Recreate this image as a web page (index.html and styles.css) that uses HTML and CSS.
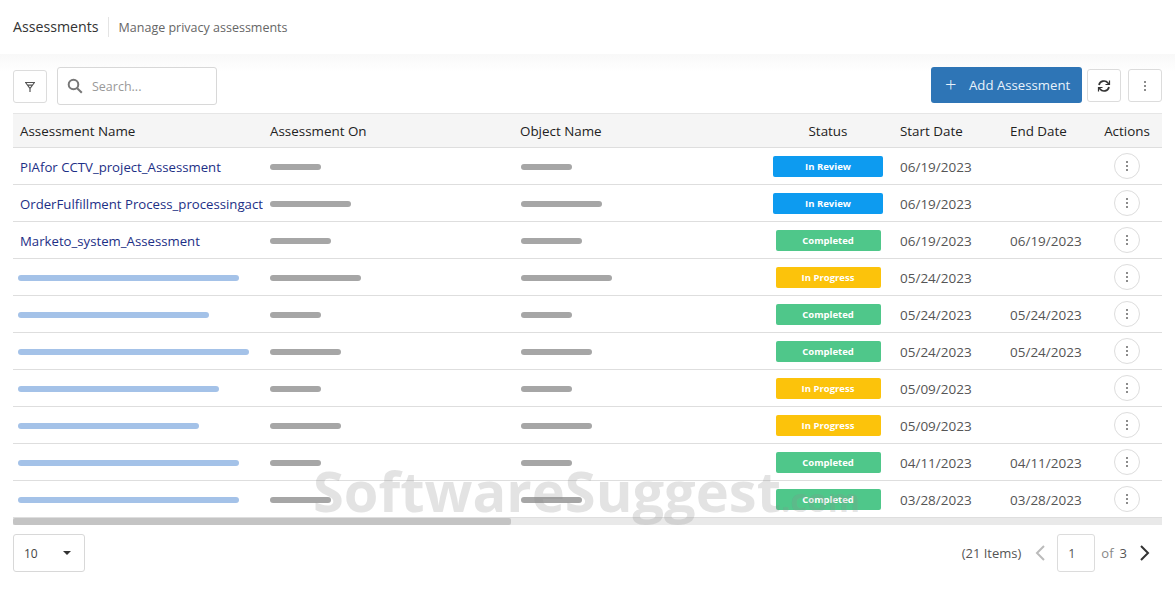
FILE: index.html
```html
<!DOCTYPE html>
<html lang="en">
<head>
<meta charset="utf-8">
<title>Assessments</title>
<link rel="stylesheet" href="styles.css">
</head>
<body>
<header class="page-head">
  <h1 class="page-title">Assessments</h1>
  <p class="page-sub">Manage privacy assessments</p>
</header>
<main class="content">
  <div class="toolbar">
    <button class="icon-btn filter" aria-label="Filter">
      <svg width="14" height="14" viewBox="0 0 14 14" fill="none" stroke="#555" stroke-width="1.2"><path d="M2 2.5h10M2.6 2.5 7 8.5l4.4-6M4 5.2h6M7 8.5V12"/></svg>
    </button>
    <div class="search">
      <svg width="16" height="16" viewBox="0 0 16 16" fill="none" stroke="#777" stroke-width="2"><circle cx="6.5" cy="6.5" r="4.8"/><path d="m10.2 10.2 4.6 4.6"/></svg>
      <span>Search...</span>
    </div>
    <button class="add-btn"><span class="plus">+</span>Add Assessment</button>
    <button class="icon-btn refresh" aria-label="Refresh">
      <svg width="14" height="14" viewBox="0 0 14 14" fill="none" stroke="#333" stroke-width="1.7"><path d="M2 6a5.1 5.1 0 0 1 9-2l1 1.2M12 8a5.1 5.1 0 0 1-9 2L2 8.800"/><path d="M12.500 1.500v4h-4M1.500 12.500v-4h4" stroke-width="1.200"/></svg>
    </button>
    <button class="icon-btn more" aria-label="More"><i class="dots"></i></button>
  </div>

  <table class="grid">
    <thead>
      <tr>
        <th class="c-name">Assessment Name</th>
        <th class="c-on">Assessment On</th>
        <th class="c-obj">Object Name</th>
        <th class="c-status">Status</th>
        <th class="c-start">Start Date</th>
        <th class="c-end">End Date</th>
        <th class="c-act">Actions</th>
      </tr>
    </thead>
    <tbody>
      <tr>
        <td><a class="link">PIAfor CCTV_project_Assessment</a></td>
        <td><i class="bar" style="width:51px"></i></td>
        <td><i class="bar obj" style="width:51px"></i></td>
        <td class="mid"><span class="badge review">In Review</span></td>
        <td>06/19/2023</td><td></td>
        <td class="mid"><button class="row-act" aria-label="Row actions"><i class="dots"></i></button></td>
      </tr>
      <tr>
        <td><a class="link">OrderFulfillment Process_processingact</a></td>
        <td><i class="bar" style="width:81px"></i></td>
        <td><i class="bar obj" style="width:81px"></i></td>
        <td class="mid"><span class="badge review">In Review</span></td>
        <td>06/19/2023</td><td></td>
        <td class="mid"><button class="row-act" aria-label="Row actions"><i class="dots"></i></button></td>
      </tr>
      <tr>
        <td><a class="link">Marketo_system_Assessment</a></td>
        <td><i class="bar" style="width:61px"></i></td>
        <td><i class="bar obj" style="width:61px"></i></td>
        <td class="mid"><span class="badge done">Completed</span></td>
        <td>06/19/2023</td><td>06/19/2023</td>
        <td class="mid"><button class="row-act" aria-label="Row actions"><i class="dots"></i></button></td>
      </tr>
      <tr>
        <td><i class="bar name" style="width:221px"></i></td>
        <td><i class="bar" style="width:91px"></i></td>
        <td><i class="bar obj" style="width:91px"></i></td>
        <td class="mid"><span class="badge progress">In Progress</span></td>
        <td>05/24/2023</td><td></td>
        <td class="mid"><button class="row-act" aria-label="Row actions"><i class="dots"></i></button></td>
      </tr>
      <tr>
        <td><i class="bar name" style="width:191px"></i></td>
        <td><i class="bar" style="width:51px"></i></td>
        <td><i class="bar obj" style="width:51px"></i></td>
        <td class="mid"><span class="badge done">Completed</span></td>
        <td>05/24/2023</td><td>05/24/2023</td>
        <td class="mid"><button class="row-act" aria-label="Row actions"><i class="dots"></i></button></td>
      </tr>
      <tr>
        <td><i class="bar name" style="width:231px"></i></td>
        <td><i class="bar" style="width:71px"></i></td>
        <td><i class="bar obj" style="width:71px"></i></td>
        <td class="mid"><span class="badge done">Completed</span></td>
        <td>05/24/2023</td><td>05/24/2023</td>
        <td class="mid"><button class="row-act" aria-label="Row actions"><i class="dots"></i></button></td>
      </tr>
      <tr>
        <td><i class="bar name" style="width:201px"></i></td>
        <td><i class="bar" style="width:51px"></i></td>
        <td><i class="bar obj" style="width:51px"></i></td>
        <td class="mid"><span class="badge progress">In Progress</span></td>
        <td>05/09/2023</td><td></td>
        <td class="mid"><button class="row-act" aria-label="Row actions"><i class="dots"></i></button></td>
      </tr>
      <tr>
        <td><i class="bar name" style="width:181px"></i></td>
        <td><i class="bar" style="width:71px"></i></td>
        <td><i class="bar obj" style="width:71px"></i></td>
        <td class="mid"><span class="badge progress">In Progress</span></td>
        <td>05/09/2023</td><td></td>
        <td class="mid"><button class="row-act" aria-label="Row actions"><i class="dots"></i></button></td>
      </tr>
      <tr>
        <td><i class="bar name" style="width:221px"></i></td>
        <td><i class="bar" style="width:51px"></i></td>
        <td><i class="bar obj" style="width:51px"></i></td>
        <td class="mid"><span class="badge done">Completed</span></td>
        <td>04/11/2023</td><td>04/11/2023</td>
        <td class="mid"><button class="row-act" aria-label="Row actions"><i class="dots"></i></button></td>
      </tr>
      <tr>
        <td><i class="bar name" style="width:221px"></i></td>
        <td><i class="bar" style="width:61px"></i></td>
        <td><i class="bar obj" style="width:61px"></i></td>
        <td class="mid"><span class="badge done">Completed</span></td>
        <td>03/28/2023</td><td>03/28/2023</td>
        <td class="mid"><button class="row-act" aria-label="Row actions"><i class="dots"></i></button></td>
      </tr>
    </tbody>
  </table>
  <div class="scroll-track"><div class="scroll-thumb"></div></div>

  <footer class="pager">
    <div class="page-size"><span>10</span><i class="caret"></i></div>
    <div class="pager-right">
      <span class="items">(21 Items)</span>
      <svg class="chev" width="12" height="18" viewBox="0 0 12 18" fill="none" stroke="#bbb" stroke-width="2"><path d="M10 2 3 9l7 7"/></svg>
      <div class="page-num">1</div>
      <span class="of">of</span>
      <span class="total">3</span>
      <svg class="chev" width="12" height="18" viewBox="0 0 12 18" fill="none" stroke="#333" stroke-width="2"><path d="m2 2 7 7-7 7"/></svg>
    </div>
  </footer>
</main>
<div class="watermark">SoftwareSuggest<small>.com</small></div>
</body>
</html>
```
FILE: styles.css
```css
* { box-sizing: border-box; }
html, body { margin: 0; height: 100%; }
body {
  position: relative;
  overflow: hidden;
  background: #fff;
  color: #444;
  font-family: "Open Sans", "Noto Sans", sans-serif;
  font-size: 14px;
}
button { font-family: inherit; cursor: pointer; padding: 0; }
i { display: block; }

.page-head {
  height: 54px;
  padding-left: 13px;
  display: flex;
  align-items: center;
  gap: 10px;
}
.page-title {
  margin: 0;
  padding-right: 9px;
  border-right: 1px solid #e4e4e4;
  font-size: 14.2px;
  line-height: 20px;
  font-weight: 400;
  color: #333;
}
.page-sub { margin: 1px 0 0; font-size: 12.5px; color: #666; font-weight: 500; }

.content {
  padding: 13px 13px 0;
  background: linear-gradient(#f8f8f8 0, #fff 18px);
}
.toolbar {
  display: flex;
  align-items: center;
  height: 38px;
  margin-bottom: 8px;
}
.icon-btn {
  width: 34px;
  height: 33px;
  display: flex;
  align-items: center;
  justify-content: center;
  background: #fff;
  border: 1px solid #dcdcdc;
  border-radius: 3px;
}
.filter { margin-top: 1px; }
.search {
  width: 160px;
  height: 38px;
  margin-left: 10px;
  padding-left: 9px;
  display: flex;
  align-items: center;
  gap: 9px;
  margin-right: auto;
  border: 1px solid #d8d8d8;
  border-radius: 3px;
  background: #fff;
  font-size: 12.5px;
  color: #999;
}
.add-btn {
  width: 151px;
  height: 36px;
  margin-top: -2px;
  margin-right: 5px;
  display: flex;
  align-items: center;
  padding-left: 14px;
  border: 0;
  border-radius: 3px;
  background: #2e75b6;
  color: #e8f2fb;
  font-size: 13.2px;
}
.plus { width: 24px; font-size: 20px; line-height: 20px; font-weight: 300; text-align: left; }
.refresh { margin-right: 7px; margin-top: -1px; }
.more { margin-top: -1px; }
.dots, .dots::before, .dots::after {
  width: 2px;
  height: 2px;
  background: #666;
  border-radius: 1px;
}
.dots { position: relative; }
.dots::before, .dots::after { content: ""; position: absolute; left: 0; }
.dots::before { top: -4px; }
.dots::after { top: 4px; }

.grid {
  width: 1149px;
  table-layout: fixed;
  border-collapse: collapse;
}
.grid th, .grid td {
  padding: 0 0 0 7px;
  border-bottom: 1px solid #dedede;
  text-align: left;
  white-space: nowrap;
  overflow: hidden;
}
.grid th {
  height: 34px;
  background: #f5f5f5;
  border-top: 1px solid #e6e6e6;
  font-size: 13.4px;
  font-weight: 500;
  color: #222;
}
.grid td { height: 37px; padding-top: 2px; font-size: 13.5px; color: #555; }
.c-name, .c-on, .c-obj { width: 250px; }
.c-status { width: 130px; }
.c-start { width: 110px; }
.c-end { width: 89px; }
.c-act { width: 70px; }
.grid th.c-status, .grid th.c-act, .grid td.mid { text-align: center; padding-left: 0; }
.grid td.mid { padding-top: 0; }
.link { color: #1d2f86; font-size: 13.2px; }

.bar {
  height: 6px;
  border-radius: 3px;
  background: #a6a6a6;
}
.bar.obj { margin-left: 1px; }
.bar.name { margin-left: -2px; background: #a4c2e8; }

.badge {
  display: inline-block;
  height: 21px;
  line-height: 21px;
  vertical-align: middle;
  border-radius: 2px;
  color: #fff;
  font-size: 9.5px;
  font-weight: 700;
  text-align: center;
}
.review { width: 110px; background: #0d9bf0; }
.done { width: 105px; background: #4fc78a; }
.progress { width: 105px; background: #fcc30b; }

.row-act {
  width: 26px;
  height: 26px;
  display: inline-flex;
  align-items: center;
  justify-content: center;
  vertical-align: middle;
  background: #fff;
  border: 1px solid #ddd;
  border-radius: 50%;
}

.scroll-track { height: 7px; background: #e9e9e9; }
.scroll-thumb { width: 498px; height: 7px; background: #c4c4c4; border-radius: 2px; }

.pager {
  height: 38px;
  margin-top: 9px;
  display: flex;
  align-items: center;
  justify-content: space-between;
}
.page-size {
  width: 72px;
  height: 38px;
  padding: 0 13px 0 10px;
  display: flex;
  align-items: center;
  justify-content: space-between;
  border: 1px solid #d8d8d8;
  border-radius: 3px;
  font-size: 12px;
  color: #444;
}
.caret {
  border-left: 4px solid transparent;
  border-right: 4px solid transparent;
  border-top: 4px solid #333;
}
.pager-right { display: flex; align-items: center; font-size: 13px; color: #555; padding-right: 11px; }
.items { margin-right: 13px; }
.page-num {
  width: 38px;
  height: 38px;
  margin: 0 6px 0 11px;
  padding-left: 10px;
  display: flex;
  align-items: center;
  border: 1px solid #dcdcdc;
  border-radius: 3px;
  font-size: 12.5px;
}
.of { color: #888; margin-right: 6px; }
.total { margin-right: 12px; }

.watermark {
  position: absolute;
  left: 313px;
  top: 452px;
  font-size: 56px;
  line-height: 76px;
  font-weight: 700;
  color: rgba(140, 140, 140, 0.24);
  white-space: nowrap;
  pointer-events: none;
}
.watermark small { font-size: 33px; }
```
